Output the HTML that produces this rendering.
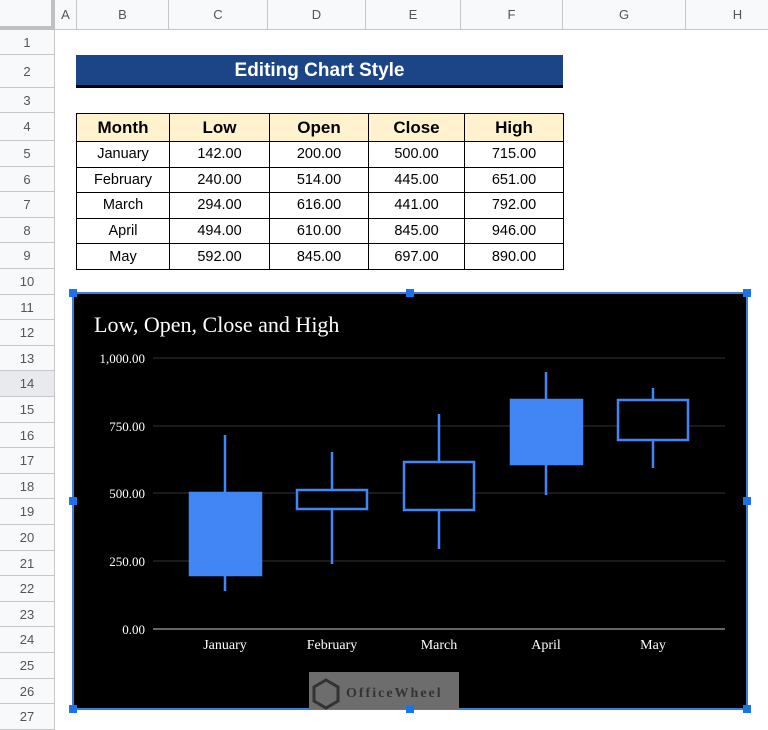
<!DOCTYPE html><html><head><style>
body{margin:0;width:768px;height:730px;overflow:hidden;background:#fff;font-family:"Liberation Sans",Arial,sans-serif;position:relative}
.a{position:absolute;box-sizing:border-box}
.ch{background:#f8f9fa;color:#555;font-size:13px;text-align:center;border-right:1px solid #c7c7c7;border-bottom:1px solid #c7c7c7}
td{border:1px solid #000;text-align:center;font-size:14.5px;padding:0;height:24.6px}
</style></head><body>
<div class="a" style="left:0;top:0;width:768px;height:30px;background:#f8f9fa;border-bottom:1px solid #c7c7c7"></div>
<div id="cols"></div><div id="rows"></div>
<div class="a" style="left:0;top:0;width:55px;height:30px;border-right:4px solid #c0c0c0;border-bottom:4px solid #c0c0c0;background:#f8f9fa"></div>
<div class="a" style="left:76px;top:55px;width:487px;height:33px;background:#1c4587;border-bottom:3px solid #000;color:#fff;font-weight:bold;font-size:19px;text-align:center;line-height:32px">Editing Chart Style</div>
<table class="a" style="left:76px;top:113px;border-collapse:collapse;width:488px">
<tr style="background:#fff2cc;font-weight:bold"><td style="width:92px;height:27px;font-size:17px;font-weight:bold">Month</td><td style="width:99px;font-size:17px;font-weight:bold">Low</td><td style="width:98px;font-size:17px;font-weight:bold">Open</td><td style="width:95px;font-size:17px;font-weight:bold">Close</td><td style="font-size:17px;font-weight:bold">High</td></tr>
<tr><td>January</td><td>142.00</td><td>200.00</td><td>500.00</td><td>715.00</td></tr>
<tr><td>February</td><td>240.00</td><td>514.00</td><td>445.00</td><td>651.00</td></tr>
<tr><td>March</td><td>294.00</td><td>616.00</td><td>441.00</td><td>792.00</td></tr>
<tr><td>April</td><td>494.00</td><td>610.00</td><td>845.00</td><td>946.00</td></tr>
<tr><td>May</td><td>592.00</td><td>845.00</td><td>697.00</td><td>890.00</td></tr>
</table>
<svg class="a" style="left:0;top:0" width="768" height="730">
<rect x="73" y="293" width="674" height="416" fill="#000" stroke="#3b7ddd" stroke-width="2"/>
<text x="94" y="332" font-family="Liberation Serif,serif" font-size="22" fill="#fff">Low, Open, Close and High</text>
<g stroke="#333" stroke-width="1"><line x1="153" x2="725" y1="358" y2="358"/><line x1="153" x2="725" y1="426" y2="426"/><line x1="153" x2="725" y1="493" y2="493"/><line x1="153" x2="725" y1="561" y2="561"/></g>
<line x1="153" x2="725" y1="629" y2="629" stroke="#ccc"/>
<g font-family="Liberation Serif,serif" font-size="13" fill="#fff" text-anchor="end"><text x="145" y="363">1,000.00</text><text x="145" y="431">750.00</text><text x="145" y="498">500.00</text><text x="145" y="566">250.00</text><text x="145" y="634">0.00</text></g>
<g font-family="Liberation Serif,serif" font-size="14" fill="#fff" text-anchor="middle"><text x="225" y="649">January</text><text x="332" y="649">February</text><text x="439" y="649">March</text><text x="546" y="649">April</text><text x="653" y="649">May</text></g>
<g stroke="#4285f4" stroke-width="2.5" fill="none">
<line x1="225" x2="225" y1="435" y2="591"/><rect x="190" y="493" width="71" height="82" fill="#4285f4"/>
<line x1="332" x2="332" y1="452" y2="564"/><rect x="297" y="490" width="70" height="19" fill="#000"/>
<line x1="439" x2="439" y1="414" y2="549"/><rect x="404" y="462" width="70" height="48" fill="#000"/>
<line x1="546" x2="546" y1="372" y2="495"/><rect x="511" y="400" width="71" height="64" fill="#4285f4"/>
<line x1="653" x2="653" y1="388" y2="468"/><rect x="618" y="400" width="70" height="40" fill="#000"/>
</g>
<rect x="309" y="672" width="150" height="37" fill="#6d6d6d"/>
<polygon points="326,680 338,687 338,701 326,708 314,701 314,687" fill="none" stroke="#333" stroke-width="3"/>
<text x="346" y="697" font-family="Liberation Serif,serif" font-weight="bold" font-size="14" fill="#333" letter-spacing="2">OfficeWheel</text>
<g fill="#1a73e8"><rect x="69" y="289" width="8" height="8"/><rect x="406" y="289" width="8" height="8"/><rect x="743" y="289" width="8" height="8"/><rect x="69" y="497" width="8" height="8"/><rect x="743" y="497" width="8" height="8"/><rect x="69" y="705" width="8" height="8"/><rect x="406" y="705" width="8" height="8"/><rect x="743" y="705" width="8" height="8"/></g>
</svg>
<script>
var cx=[55,77,169,268,366,461,563,686,790],n="ABCDEFGH",h="";
for(var i=0;i<8;i++)h+='<div class="a ch" style="left:'+cx[i]+'px;top:0;width:'+(cx[i+1]-cx[i])+'px;height:30px;line-height:30px">'+n[i]+'</div>';
document.getElementById("cols").innerHTML=h;
var ry=[30,55,88,113,141];for(var k=5;k<=27;k++)ry.push(141+(k-4)*25.6);
h="";for(var r=1;r<=27;r++){var t=ry[r-1],b=ry[r];h+='<div class="a ch" style="left:0;top:'+t+'px;width:55px;height:'+(b-t)+'px;line-height:'+(b-t)+'px;'+(r==14?'background:#e8eaed;':'')+'">'+r+'</div>';}
document.getElementById("rows").innerHTML=h;
</script>
</body></html>
